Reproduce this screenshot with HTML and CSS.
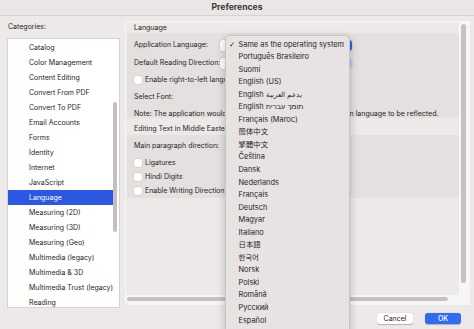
FILE: index.html
```html
<!DOCTYPE html>
<html>
<head>
<meta charset="utf-8">
<link rel="stylesheet" href="styles.css">
</head>
<body>
<div class="window">
  <div class="titlebar">Preferences</div>
  <div class="main">
    <div class="left">
      <div class="label">Categories:</div>
      <div class="listbox">
        <div class="list">
          <div class="item">Catalog</div>
          <div class="item">Color Management</div>
          <div class="item">Content Editing</div>
          <div class="item">Convert From PDF</div>
          <div class="item">Convert To PDF</div>
          <div class="item">Email Accounts</div>
          <div class="item">Forms</div>
          <div class="item">Identity</div>
          <div class="item">Internet</div>
          <div class="item">JavaScript</div>
          <div class="item selected">Language</div>
          <div class="item">Measuring (2D)</div>
          <div class="item">Measuring (3D)</div>
          <div class="item">Measuring (Geo)</div>
          <div class="item">Multimedia (legacy)</div>
          <div class="item">Multimedia &amp; 3D</div>
          <div class="item">Multimedia Trust (legacy)</div>
          <div class="item">Reading</div>
        </div>
        <div class="vscroll-list"><div class="thumb"></div></div>
      </div>
    </div>
    <div class="panel">
      <div class="content">
        <div class="heading">Language</div>
        <div class="group group1">
          <div class="row"><span class="rlabel">Application Language:</span><span class="popup"><span class="cap"></span></span></div>
          <div class="row"><span class="rlabel">Default Reading Direction:</span><span class="popup disabled"><span class="cap"></span></span></div>
          <div class="row check"><span class="box"></span><span>Enable right-to-left language options</span></div>
          <div class="row">Select Font:</div>
          <div class="row nowrap">Note: The application would need to be restarted for the change in language to be reflected.</div>
        </div>
        <div class="heading h2">Editing Text in Middle Eastern Languages</div>
        <div class="group group2">
          <div class="row">Main paragraph direction:</div>
          <div class="row check tall"><span class="box"></span><span>Ligatures</span></div>
          <div class="row check tall"><span class="box"></span><span>Hindi Digits</span></div>
          <div class="row check tall"><span class="box"></span><span>Enable Writing Direction Switching</span></div>
        </div>
      </div>
      <div class="vscroll"><div class="thumb"></div></div>
      <div class="hscroll"><div class="thumb"></div></div>
      <div class="corner"></div>
    </div>
  </div>
  <div class="footer">
    <button class="btn">Cancel</button>
    <button class="btn primary">OK</button>
  </div>

  <div class="menu">
    <div class="mi"><span class="tick">✓</span>Same as the operating system</div>
    <div class="mi">Português Brasileiro</div>
    <div class="mi">Suomi</div>
    <div class="mi">English (US)</div>
    <div class="mi">English <span dir="rtl">يدعم العربية</span></div>
    <div class="mi">English <span dir="rtl">תומך עברית</span></div>
    <div class="mi">Français (Maroc)</div>
    <div class="mi cjk-sc">簡体中文</div>
    <div class="mi cjk-tc">繁體中文</div>
    <div class="mi">Čeština</div>
    <div class="mi">Dansk</div>
    <div class="mi">Nederlands</div>
    <div class="mi">Français</div>
    <div class="mi">Deutsch</div>
    <div class="mi">Magyar</div>
    <div class="mi">Italiano</div>
    <div class="mi cjk-jp">日本語</div>
    <div class="mi cjk-kr">한국어</div>
    <div class="mi">Norsk</div>
    <div class="mi">Polski</div>
    <div class="mi">Română</div>
    <div class="mi">Русский</div>
    <div class="mi">Español</div>
  </div>
</div>
</body>
</html>
```
FILE: styles.css
```css
* { box-sizing: border-box; }
html, body { margin: 0; padding: 0; }
body {
  width: 474px;
  height: 329px;
  overflow: hidden;
  background: #ece9e8;
  font-family: Inter, "Liberation Sans", "Noto Sans CJK SC", sans-serif;
  font-size: 7px;
  color: #262424;
}
.window { position: relative; width: 474px; height: 329px; display: flex; flex-direction: column; }
.titlebar {
  height: 16px;
  line-height: 15px;
  text-align: center;
  font-weight: 700;
  font-size: 8.6px;
  color: #3a3838;
  background: #e9e6e5;
  border-bottom: 1px solid #d7d4d3;
  flex: none;
}
.main {
  display: flex;
  gap: 5px;
  padding: 5px 4px 0 7px;
  height: 292px;
  flex: none;
}
.left { width: 113px; display: flex; flex-direction: column; flex: none; }
.label { height: 12px; line-height: 12px; margin-left: 1px; margin-bottom: 5px; }
.listbox {
  height: 270px;
  background: #fff;
  border: 1px solid #d6d3d2;
  display: flex;
  overflow: hidden;
}
.list { flex: 1; padding-top: 1px; display: flex; flex-direction: column; }
.item { height: 15px; line-height: 15px; padding-left: 21px; flex: none; white-space: nowrap; }
.item.selected { background: #2b57e3; color: #fff; }
.vscroll-list { width: 6px; flex: none; padding-top: 63px; padding-right: 1px; }
.vscroll-list .thumb { width: 4px; height: 130px; border-radius: 2px; background: #c3c1c0; }

.panel {
  width: 345px;
  height: 284px;
  border: 1px solid #f6f5f5;
  display: grid;
  grid-template-columns: 333px 10px;
  grid-template-rows: 273px 9px;
  flex: none;
}
.content { overflow: hidden; padding-left: 1px; padding-top: 1px; display: flex; flex-direction: column; }
.heading { height: 10px; line-height: 10px; padding-left: 7px; flex: none; }
.heading.h2 { height: 12px; line-height: 12px; margin-top: 5px; }
.group {
  background: #e3e0df;
  border-radius: 3px;
  display: flex;
  flex-direction: column;
  flex: none;
  width: 333px;
  padding-left: 7px;
}
.group1 { height: 85px; padding-top: 6px; gap: 5px; }
.group1 .row:first-child { margin-bottom: 1px; }
.group2 { height: 63px; padding-top: 5px; }
.group2 .row:first-child { margin-bottom: 4px; }
.row { height: 12px; line-height: 12px; display: flex; align-items: center; white-space: nowrap; flex: none; }
.row.tall { height: 14px; }
.rlabel { width: 86px; flex: none; }
.popup {
  width: 132px; height: 11px; background: #fff; border-radius: 3px;
  box-shadow: 0 0 0 0.5px #c9c6c5; display: flex; justify-content: flex-end; flex: none;
}
.popup .cap { width: 8px; height: 11px; background: #2d62e8; border-radius: 0 3px 3px 0; }
.popup.disabled .cap { background: #b9c6ef; }
.box {
  width: 8px; height: 8px; background: #fff; border-radius: 2px;
  box-shadow: 0 0 0 0.5px #c7c4c3; margin-right: 3px; flex: none;
}
.vscroll { grid-column: 2; grid-row: 1; background: #f7f6f6; padding: 2px 2px 0 2px; }
.vscroll .thumb { width: 5px; height: 259px; border-radius: 3px; background: #c4c2c1; }
.hscroll { grid-column: 1; grid-row: 2; background: #f7f6f6; padding: 2px 0 0 1px; border-radius: 0 0 0 3px; }
.hscroll .thumb { width: 321px; height: 4px; border-radius: 2px; background: #c4c2c1; }
.corner { grid-column: 2; grid-row: 2; background: #f7f6f6; }

.footer {
  display: flex;
  justify-content: flex-end;
  gap: 12px;
  padding: 5px 13px 0 0;
}
.btn {
  width: 36px; height: 11px; padding: 0; border: 0;
  font-family: inherit; font-size: 7px; line-height: 11px;
  border-radius: 3px; background: #fff; color: #262424;
  box-shadow: 0 0.5px 1px rgba(0,0,0,0.25);
}
.btn.primary { background: #2f6cf2; color: #fff; font-weight: 500; }

.menu {
  position: absolute;
  left: 225px;
  top: 35px;
  width: 125px;
  height: 300px;
  background: #e6e3e2;
  border: 0.5px solid #c7c4c3;
  border-radius: 5px;
  box-shadow: 0 3px 10px rgba(0,0,0,0.22);
  padding-top: 2.5px;
  font-size: 7.4px;
}
.mi { height: 12.55px; line-height: 12.55px; padding-left: 12.5px; position: relative; white-space: nowrap; color: #1f1e1e; }
.tick { position: absolute; left: 3px; top: 0; font-size: 7.5px; font-family: "DejaVu Sans", sans-serif; }
.cjk-sc { font-family: Inter, "Noto Sans CJK SC", sans-serif; }
.cjk-tc { font-family: Inter, "Noto Sans CJK TC", sans-serif; }
.cjk-jp { font-family: Inter, "Noto Sans CJK JP", sans-serif; }
.cjk-kr { font-family: Inter, "Noto Sans CJK KR", sans-serif; }
```
